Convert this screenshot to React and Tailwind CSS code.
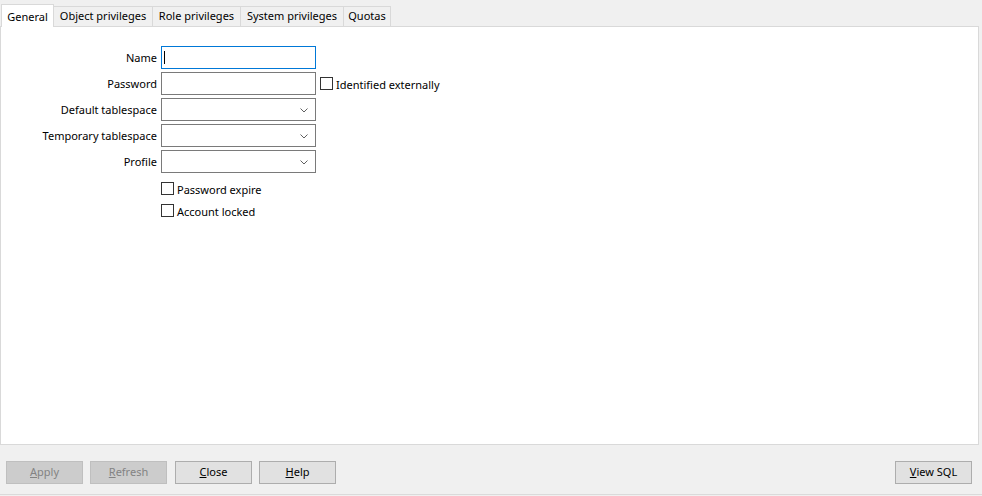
import React from 'react';

const font = { fontFamily: '"Noto Sans", "Segoe UI", sans-serif' };

function Chevron() {
    return (
        <svg width="8" height="5" viewBox="0 0 8 5" className="absolute right-[7px] top-[9px]">
            <polyline points="0.5,0.5 4,4 7.5,0.5" fill="none" stroke="#606060" strokeWidth="1" />
        </svg>
    );
}

function Field({ focused, combo, caret }) {
    return (
        <div
            className={
                'relative h-[23px] w-[155px] bg-white border ' +
                (focused ? 'border-[#0078d7]' : 'border-[#7a7a7a]')
            }
        >
            {caret && <div className="absolute left-[2px] top-[4px] h-[13px] w-px bg-black" />}
            {combo && <Chevron />}
        </div>
    );
}

function Check({ label }) {
    return (
        <div className="flex items-center gap-[3px]">
            <div className="h-[13px] w-[13px] bg-white border border-[#333333]" />
            <span className="pt-[2px] text-[11px] leading-none text-black">{label}</span>
        </div>
    );
}

function Btn({ children, disabled, className = '' }) {
    return (
        <div
            className={
                'flex h-[23px] w-[77px] items-center justify-center border text-[11px] ' +
                (disabled
                    ? 'bg-[#cccccc] border-[#bfbfbf] text-[#838383] '
                    : 'bg-[#e1e1e1] border-[#adadad] text-black ') +
                className
            }
        >
            {children}
        </div>
    );
}

const tabs = [
    { name: 'Object privileges', w: 'w-[99px]' },
    { name: 'Role privileges', w: 'w-[88px]' },
    { name: 'System privileges', w: 'w-[103px]' },
    { name: 'Quotas', w: 'w-[47px]' },
];

const rows = [
    { label: 'Name', focused: true, caret: true },
    { label: 'Password', extra: true },
    { label: 'Default tablespace', combo: true },
    { label: 'Temporary tablespace', combo: true },
    { label: 'Profile', combo: true },
];

export default function App() {
    return (
        <div className="w-[982px] h-[496px] bg-[#f0f0f0] overflow-hidden text-black" style={font}>
            {/* Tab strip */}
            <div className="relative z-10 flex h-[27px] items-end pl-[1px]">
                <div className="flex h-[23px] w-[53px] items-start justify-center border border-b-0 border-[#d9d9d9] bg-white pt-[4px] text-[11px]">
                    General
                </div>
                {tabs.map((t) => (
                    <div
                        key={t.name}
                        className={
                            'flex h-[20px] mb-[1px] items-center justify-center border border-l-0 border-b-0 border-[#d9d9d9] bg-[#f0f0f0] text-[11px] ' +
                            t.w
                        }
                    >
                        {t.name}
                    </div>
                ))}
            </div>

            {/* Panel */}
            <div className="-mt-[1px] h-[419px] w-[979px] border border-[#d9d9d9] bg-white pt-[19px]">
                <div className="flex flex-col gap-[3px]">
                    {rows.map((r) => (
                        <div key={r.label} className="flex items-center">
                            <div className="w-[160px] pr-[4px] pt-[1px] text-right text-[11px]">{r.label}</div>
                            <Field focused={r.focused} combo={r.combo} caret={r.caret} />
                            {r.extra && (
                                <div className="ml-[4px]">
                                    <Check label="Identified externally" />
                                </div>
                            )}
                        </div>
                    ))}
                </div>
                <div className="ml-[160px] mt-[9px] flex flex-col gap-[9px]">
                    <Check label="Password expire" />
                    <Check label="Account locked" />
                </div>
            </div>

            {/* Footer buttons */}
            <div className="flex h-[50px] items-start justify-between border-b border-[#dadada] pl-[6px] pr-[10px] pt-[16px]">
                <div className="flex gap-[7px]">
                    <Btn disabled>
                        <span><u>A</u>pply</span>
                    </Btn>
                    <Btn disabled>
                        <span><u>R</u>efresh</span>
                    </Btn>
                    <Btn className="ml-[1px]">
                        <span><u>C</u>lose</span>
                    </Btn>
                    <Btn>
                        <span><u>H</u>elp</span>
                    </Btn>
                </div>
                <Btn>
                    <span><u>V</u>iew SQL</span>
                </Btn>
            </div>
        </div>
    );
}
